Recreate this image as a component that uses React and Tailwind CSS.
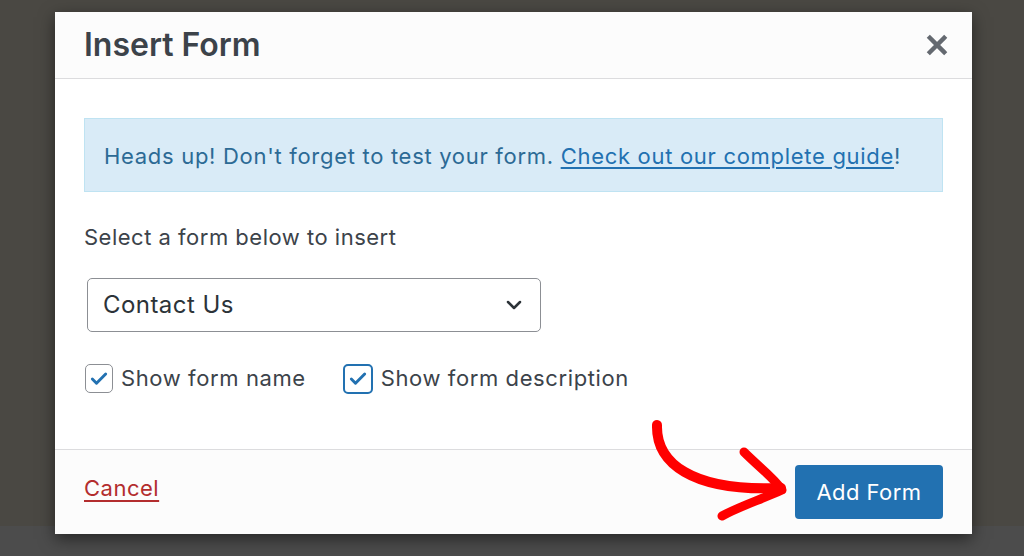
import { Check, ChevronDown } from 'lucide-react';

function Checkbox({ label, focused }) {
    return (
        <label className="flex items-center gap-[8px]">
            <span
                className={
                    focused
                        ? 'flex h-[30px] w-[30px] items-center justify-center rounded-[5px] border-[2px] border-[#2271b1] bg-white'
                        : 'flex h-[29px] w-[28px] items-center justify-center rounded-[5px] border border-[#8c8f94] bg-white'
                }
            >
                <Check className="h-[20px] w-[20px] text-[#2271b1]" strokeWidth={3.5} />
            </span>
            <span className="text-[22px] tracking-[0.6px] text-[#3c434a]">{label}</span>
        </label>
    );
}

export default function App() {
    return (
        <div
            className="relative h-[556px] w-full overflow-hidden bg-[linear-gradient(to_bottom,#4a4843_0,#4a4843_526px,#4c4c4c_526px)] pt-[12px]"
            style={{ fontFamily: 'Inter, "Noto Sans", sans-serif' }}
        >
            {/* Modal */}
            <div className="ml-[55px] flex h-[522px] w-[917px] flex-col bg-white shadow-[0_5px_15px_rgba(0,0,0,0.5)]">
                {/* Header */}
                <div className="flex h-[67px] items-center justify-between border-b border-[#dcdcde] bg-[#fcfcfc] pl-[29px] pr-[24px]">
                    <h1 className="text-[32px] font-semibold text-[#3c434a]">Insert Form</h1>
                    <svg width="22" height="22" viewBox="0 0 20 20" className="text-[#646970]">
                        <path d="M3.5 3.5 L16.5 16.5 M16.5 3.5 L3.5 16.5" stroke="currentColor" strokeWidth="4" strokeLinecap="square" />
                    </svg>
                </div>

                {/* Body */}
                <div className="flex-1 px-[29px] pt-[39px]">
                    <div className="flex h-[74px] items-center border border-[#bfe3f2] bg-[#d9ebf7] px-[19px] pt-[2px] text-[22px] tracking-[0.7px] text-[#2c6a95]">
                        <span>
                            Heads up! Don't forget to test your form.{' '}
                            <a href="#" className="text-[#2271b1] underline underline-offset-[3px]">Check out our complete guide</a>!
                        </span>
                    </div>

                    <p className="mt-[30px] text-[22px] leading-[30px] tracking-[0.5px] text-[#3c434a]">Select a form below to insert</p>

                    <div className="ml-[3px] mt-[26px] flex h-[54px] w-[454px] items-center justify-between rounded-[5px] border border-[#8c8f94] pl-[15px] pr-[14px]">
                        <span className="text-[24px] tracking-[0.45px] text-[#2c3338]">Contact Us</span>
                        <ChevronDown className="h-[24px] w-[24px] text-[#2c3338]" strokeWidth={2.5} />
                    </div>

                    <div className="mt-[30px] flex items-center gap-[37px] pl-[1px]">
                        <Checkbox label="Show form name" />
                        <Checkbox label="Show form description" focused />
                    </div>
                </div>

                {/* Footer */}
                <div className="flex h-[85px] items-center justify-between border-t border-[#dcdcde] bg-[#fcfcfc] pl-[29px] pr-[29px]">
                    <a href="#" className="-mt-[8px] text-[22px] tracking-[0.5px] text-[#b32d2e] underline underline-offset-[4px]">Cancel</a>
                    <button className="h-[54px] w-[148px] rounded-[4px] bg-[#2271b1] text-[22px] tracking-[0.45px] text-white">Add Form</button>
                </div>
            </div>

            {/* Hand-drawn arrow */}
            <svg className="pointer-events-none absolute inset-0" width="1024" height="556" viewBox="0 0 1024 556">
                <g fill="none" stroke="#ff0000" strokeLinecap="round" strokeLinejoin="round">
                    <path d="M657 425 C 656 462, 690 492, 781 488" strokeWidth="10" />
                    <path d="M744 452 C 760 468, 774 478, 782 490 C 760 500, 740 506, 722 516" strokeWidth="9" />
                </g>
            </svg>
        </div>
    );
}
